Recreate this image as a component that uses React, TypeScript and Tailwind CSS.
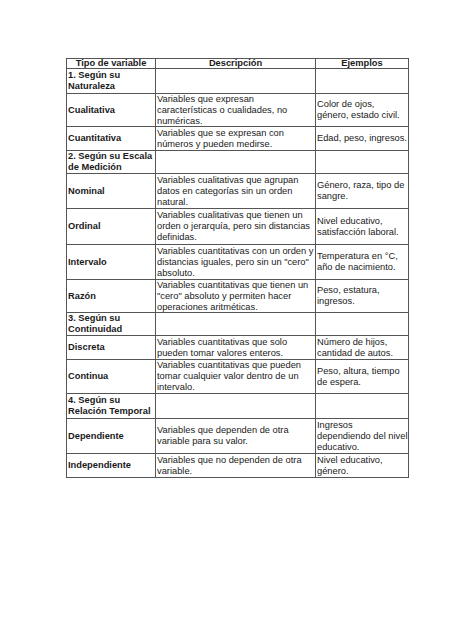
import React from "react";

type Row = {
  h: number;
  a: string[];
  b?: string[];
  c?: string[];
};

const rows: Row[] = [
  { h: 25, a: ["1. Según su", "Naturaleza"] },
  {
    h: 33,
    a: ["Cualitativa"],
    b: ["Variables que expresan", "características o cualidades, no", "numéricas."],
    c: ["Color de ojos,", "género, estado civil."],
  },
  {
    h: 24,
    a: ["Cuantitativa"],
    b: ["Variables que se expresan con", "números y pueden medirse."],
    c: ["Edad, peso, ingresos."],
  },
  { h: 23, a: ["2. Según su Escala", "de Medición"] },
  {
    h: 35,
    a: ["Nominal"],
    b: ["Variables cualitativas que agrupan", "datos en categorías sin un orden", "natural."],
    c: ["Género, raza, tipo de", "sangre."],
  },
  {
    h: 36,
    a: ["Ordinal"],
    b: ["Variables cualitativas que tienen un", "orden o jerarquía, pero sin distancias", "definidas."],
    c: ["Nivel educativo,", "satisfacción laboral."],
  },
  {
    h: 35,
    a: ["Intervalo"],
    b: ["Variables cuantitativas con un orden y", "distancias iguales, pero sin un \"cero\"", "absoluto."],
    c: ["Temperatura en °C,", "año de nacimiento."],
  },
  {
    h: 33,
    a: ["Razón"],
    b: ["Variables cuantitativas que tienen un", "\"cero\" absoluto y permiten hacer", "operaciones aritméticas."],
    c: ["Peso, estatura,", "ingresos."],
  },
  { h: 23, a: ["3. Según su", "Continuidad"] },
  {
    h: 24,
    a: ["Discreta"],
    b: ["Variables cuantitativas que solo", "pueden tomar valores enteros."],
    c: ["Número de hijos,", "cantidad de autos."],
  },
  {
    h: 34,
    a: ["Continua"],
    b: ["Variables cuantitativas que pueden", "tomar cualquier valor dentro de un", "intervalo."],
    c: ["Peso, altura, tiempo", "de espera."],
  },
  { h: 25, a: ["4. Según su", "Relación Temporal"] },
  {
    h: 35,
    a: ["Dependiente"],
    b: ["Variables que dependen de otra", "variable para su valor."],
    c: ["Ingresos", "dependiendo del nivel", "educativo."],
  },
  {
    h: 24,
    a: ["Independiente"],
    b: ["Variables que no dependen de otra", "variable."],
    c: ["Nivel educativo,", "género."],
  },
];

function Lines({ lines }: { lines?: string[] }) {
  if (!lines) return null;
  return (
    <div className="flex flex-col">
      {lines.map((l, i) => (
        <span key={i} className="whitespace-nowrap leading-[11px]">
          {l}
        </span>
      ))}
    </div>
  );
}

export default function App() {
  return (
    <div
      className="w-[474px] h-[632px] bg-white text-[#1a1a1a] text-[9.3px] pt-[58px] pl-[66px]"
      style={{ fontFamily: '"Liberation Sans", Arial, sans-serif' }}
    >
      <div className="w-[343px] border-l border-t border-[#555] flex flex-col">
        <div className="grid grid-cols-[89px_160px_93px] h-[10px] font-bold">
          <div className="border-r border-b border-[#555] flex items-center justify-center leading-[9px]">
            Tipo de variable
          </div>
          <div className="border-r border-b border-[#555] flex items-center justify-center leading-[9px]">
            Descripción
          </div>
          <div className="border-r border-b border-[#555] flex items-center justify-center leading-[9px]">
            Ejemplos
          </div>
        </div>
        {rows.map((r, i) => (
          <div
            key={i}
            className="grid grid-cols-[89px_160px_93px]"
            style={{ height: r.h }}
          >
            <div className="border-r border-b border-[#555] flex items-center pl-px font-bold overflow-hidden">
              <Lines lines={r.a} />
            </div>
            <div className="border-r border-b border-[#555] flex items-center pl-px overflow-hidden">
              <Lines lines={r.b} />
            </div>
            <div className="border-r border-b border-[#555] flex items-center pl-px overflow-hidden">
              <Lines lines={r.c} />
            </div>
          </div>
        ))}
      </div>
    </div>
  );
}
